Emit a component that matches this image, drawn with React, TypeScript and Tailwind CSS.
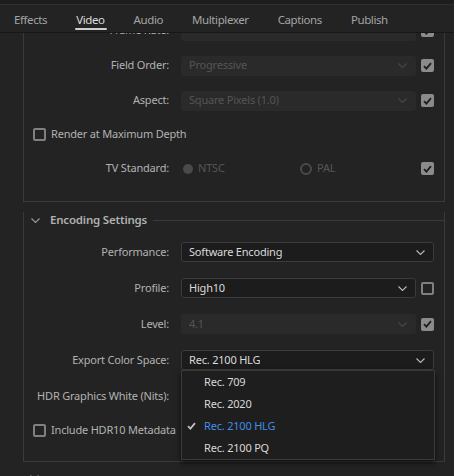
import React from "react"

const font = { fontFamily: '"Noto Sans", "Open Sans", sans-serif' }

function Chevron({ className = "" }: { className?: string }) {
  return (
    <svg width="9" height="5" viewBox="0 0 9 5" className={className} fill="none">
      <path d="M0.5 0.5 L4.5 4.5 L8.5 0.5" stroke="currentColor" strokeWidth="1.1" />
    </svg>
  )
}

function Check({ className = "" }: { className?: string }) {
  return (
    <svg width="9" height="8" viewBox="0 0 9 8" className={className} fill="none">
      <path d="M1 4.2 L3.4 6.6 L8 1.2" stroke="currentColor" strokeWidth="1.8" />
    </svg>
  )
}

function Box({ checked }: { checked: boolean }) {
  return checked ? (
    <div className="flex h-[13px] w-[13px] shrink-0 items-center justify-center rounded-[2px] bg-[#8b8b8b] text-[#1e1e1e]">
      <Check />
    </div>
  ) : (
    <div className="h-[13px] w-[13px] shrink-0 rounded-[2px] border-2 border-[#808080]" />
  )
}

function Select({ value, disabled }: { value: string; disabled?: boolean }) {
  return (
    <div
      className={`flex h-[20px] min-w-0 flex-1 items-center justify-between rounded-[3px] border pl-[7px] pr-[8px] ${
        disabled
          ? "border-[#2a2a2a] bg-[#2a2a2a] text-[#555555]"
          : "border-[#3b3b3b] bg-[#1c1c1c] text-[#dadada]"
      }`}
    >
      <span className="truncate">{value}</span>
      <Chevron className={disabled ? "text-[#474747]" : "text-[#b8b8b8]"} />
    </div>
  )
}

function Row({
  label,
  h = "h-[35px]",
  children,
}: {
  label: string
  h?: string
  children: React.ReactNode
}) {
  return (
    <div className={`flex ${h} items-center pr-[10px]`}>
      <div className="w-[145px] shrink-0 whitespace-nowrap text-right text-[#b2b2b2]">{label}</div>
      <div className="ml-[12px] flex flex-1 items-center gap-[5px]">{children}</div>
    </div>
  )
}

const tabs = ["Effects", "Video", "Audio", "Multiplexer", "Captions", "Publish"]
const spaces = ["Rec. 709", "Rec. 2020", "Rec. 2100 HLG", "Rec. 2100 PQ"]

export default function App() {
  return (
    <div
      className="flex h-[476px] w-[454px] flex-col overflow-hidden bg-[#232323] text-[11px] tracking-[-0.2px]"
      style={font}
    >
      <div className="h-[5px] shrink-0 border-b border-[#2f2f2f] bg-[#1d1d1d]" />
      <div className="flex h-[28px] shrink-0 gap-[29px] border-b border-[#171717] bg-[#232323] pl-[14px] text-[11.5px]">
        {tabs.map((t) => (
          <div
            key={t}
            className={`relative flex h-full items-center pt-[3px] ${
              t === "Video" ? "text-[#dcdcdc]" : "text-[#a3a3a3]"
            }`}
          >
            <span className="tracking-[-0.4px]">{t}</span>
            {t === "Video" && (
              <span className="absolute bottom-[2px] -left-[1px] -right-[2px] h-[2px] rounded-full bg-[#cfcfcf]" />
            )}
          </div>
        ))}
      </div>

      <div className="flex-1 overflow-hidden">
        <div className="-mt-[20px] pl-[23px] pr-[9px]">
          <div className="border-x border-b border-[#3a3a3a] pb-[15px]">
            <Row label="Frame Rate:">
              <Select value="" disabled />
              <Box checked />
            </Row>
            <Row label="Field Order:">
              <Select value="Progressive" disabled />
              <Box checked />
            </Row>
            <Row label="Aspect:">
              <Select value="Square Pixels (1.0)" disabled />
              <Box checked />
            </Row>
            <div className="flex h-[33px] items-center gap-[5px] pl-[9px] text-[#b2b2b2]">
              <Box checked={false} />
              <span>Render at Maximum Depth</span>
            </div>
            <Row label="TV Standard:">
              <div className="flex flex-1 items-center text-[#555555]">
                <div className="flex w-[119px] items-center gap-[5px] pl-[2px]">
                  <span className="h-[10px] w-[10px] rounded-full bg-[#4a4a4a]" />
                  <span>NTSC</span>
                </div>
                <div className="flex items-center gap-[5px]">
                  <span className="h-[12px] w-[12px] rounded-full border-2 border-[#4a4a4a]" />
                  <span>PAL</span>
                </div>
              </div>
              <Box checked />
            </Row>
          </div>

          <div className="relative mt-[10px] border-x border-b border-[#3a3a3a] pb-[14px]">
            <div className="-ml-px flex h-[16px] items-center">
              <div className="w-px self-stretch" />
              <Chevron className="ml-[7px] text-[#9a9a9a]" />
              <span className="ml-[10px] text-[11.5px] font-semibold text-[#b0b0b0]">Encoding Settings</span>
              <div className="ml-[6px] h-px flex-1 bg-[#3a3a3a]" />
            </div>
            <div className="pt-[6px]">
              <Row label="Performance:" h="h-[36px]">
                <Select value="Software Encoding" />
              </Row>
              <Row label="Profile:" h="h-[36px]">
                <Select value="High10" />
                <Box checked={false} />
              </Row>
              <Row label="Level:" h="h-[36px]">
                <Select value="4.1" disabled />
                <Box checked />
              </Row>
              <Row label="Export Color Space:" h="h-[36px]">
                <Select value="Rec. 2100 HLG" />
              </Row>
              <Row label="HDR Graphics White (Nits):" h="h-[36px]">
                <Select value="203" />
              </Row>
              <div className="flex h-[33px] items-center gap-[5px] pl-[9px] text-[#b2b2b2]">
                <Box checked={false} />
                <span>Include HDR10 Metadata</span>
              </div>
            </div>

            <div className="absolute left-[157px] top-[158px] z-20 w-[254px] border border-[#3a3a3a] bg-[#1e1e1e] shadow-[0_3px_6px_rgba(0,0,0,0.6)]">
              {spaces.map((s) => (
                <div key={s} className="flex h-[22px] items-center">
                  <div className="flex w-[22px] pl-[5px] text-[#bdbdbd]">
                    {s === "Rec. 2100 HLG" && <Check />}
                  </div>
                  <span className={s === "Rec. 2100 HLG" ? "text-[#3d8fe8]" : "text-[#d8d8d8]"}>{s}</span>
                </div>
              ))}
            </div>
          </div>

          <div className="mt-[7px] flex h-[16px] items-center pl-[7px]">
            <Chevron className="text-[#9a9a9a]" />
          </div>
        </div>
      </div>
    </div>
  )
}
